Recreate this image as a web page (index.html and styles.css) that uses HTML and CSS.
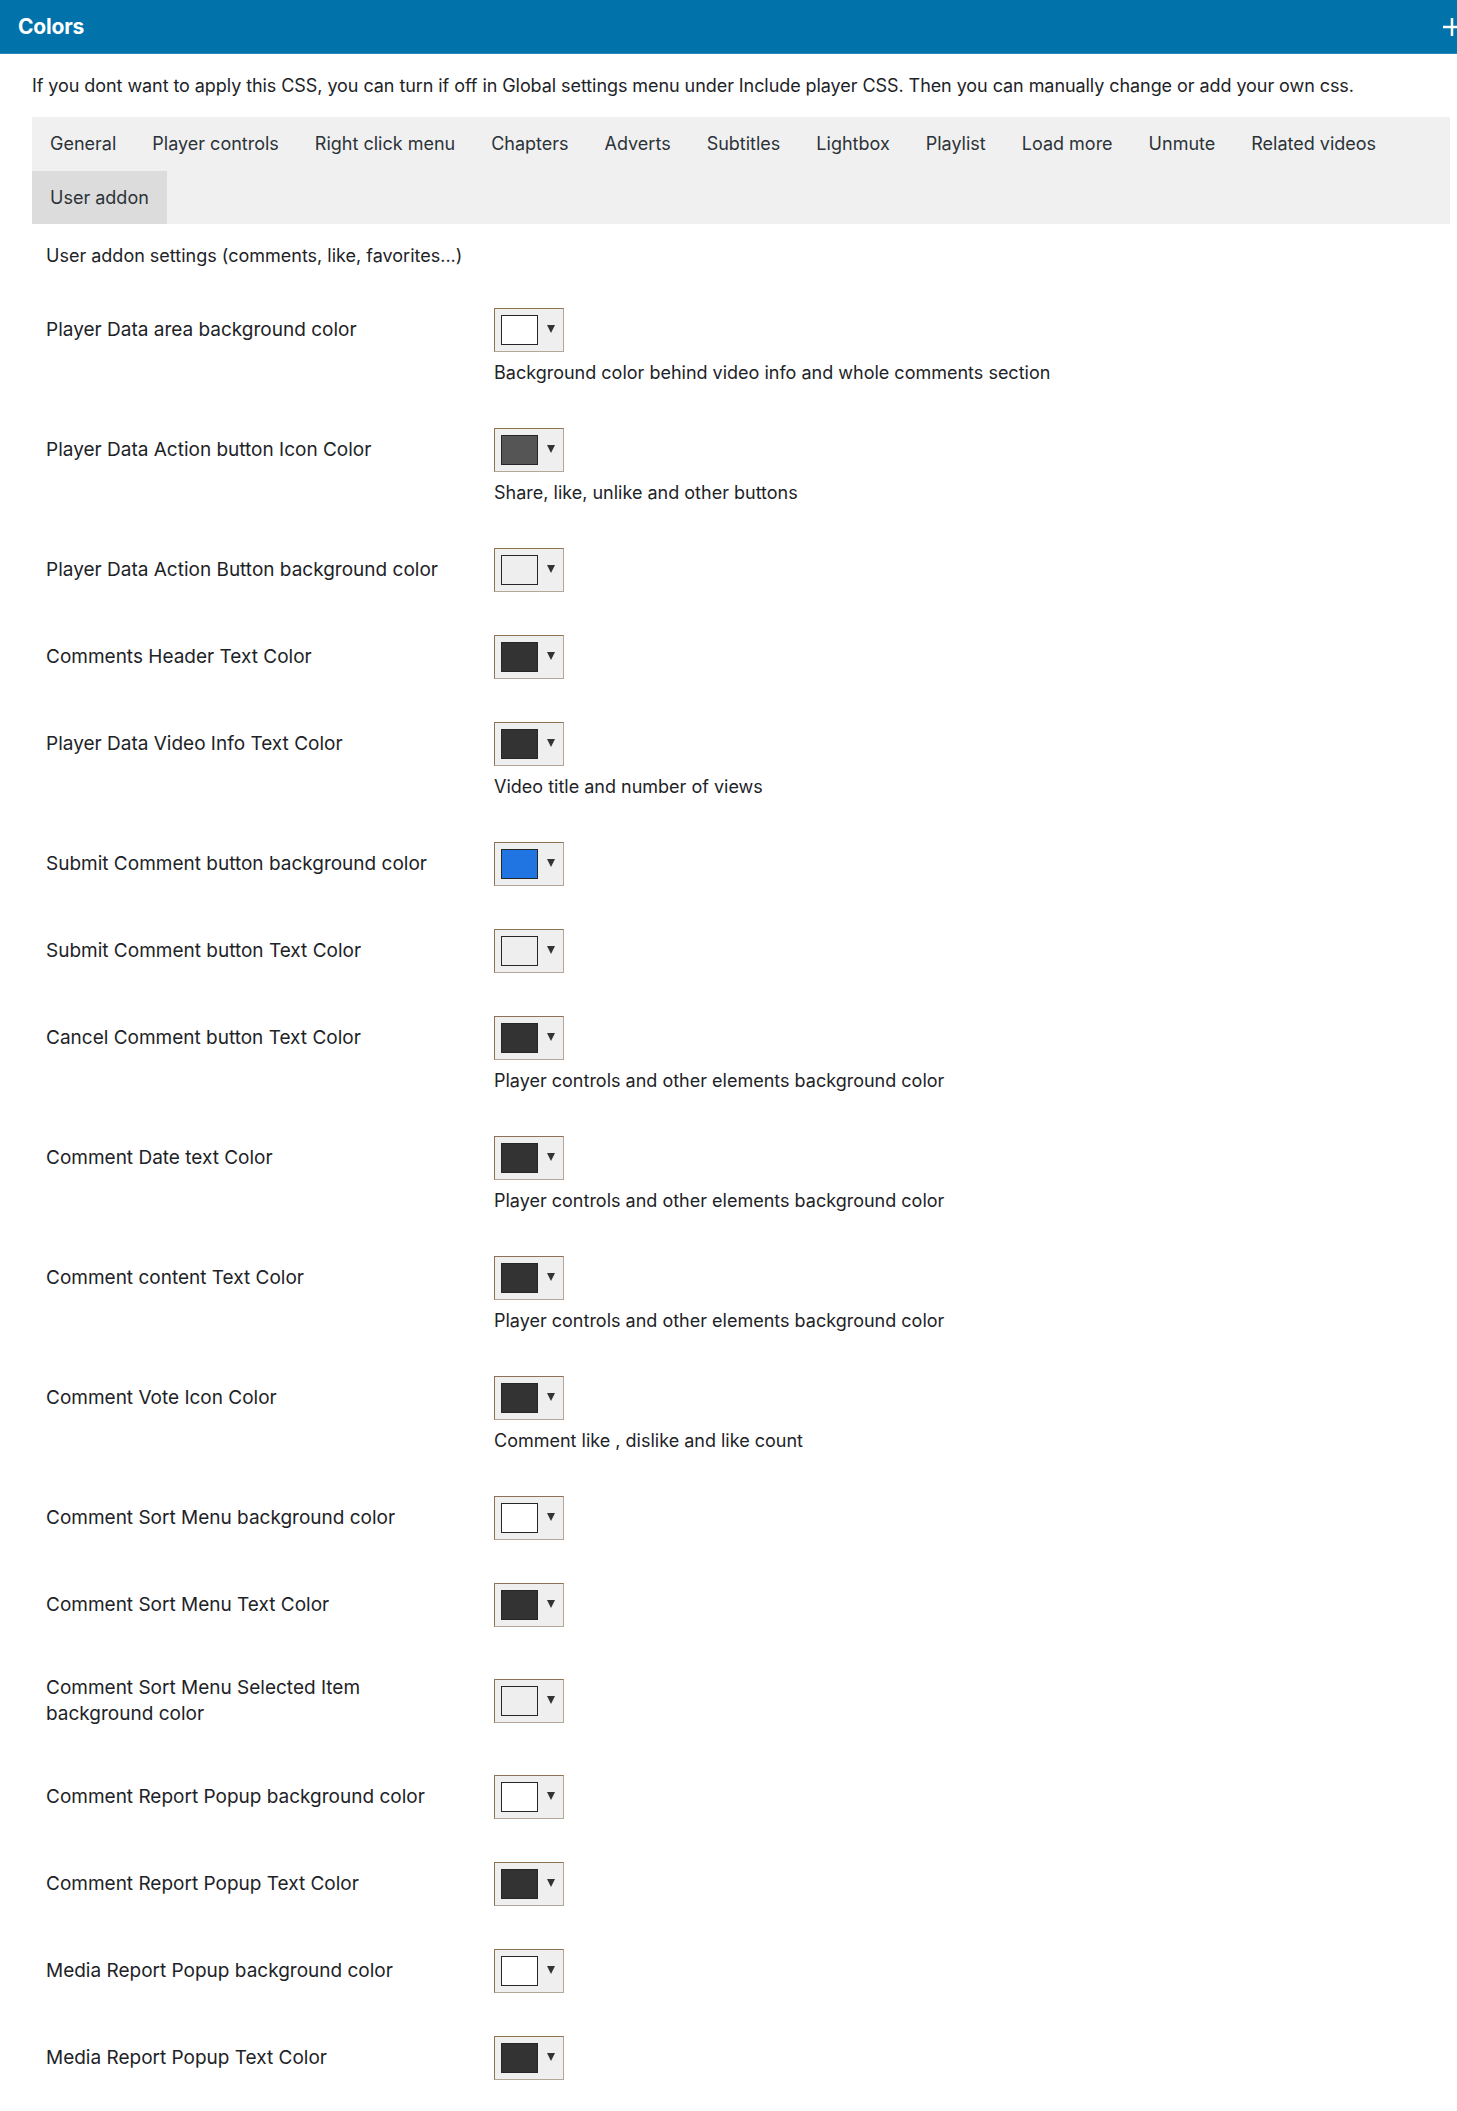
FILE: index.html
```html
<!DOCTYPE html>
<html lang="en">
<head>
<meta charset="utf-8">
<title>Colors</title>
<link rel="stylesheet" href="styles.css">
</head>
<body>
<div class="panel">
  <div class="panel-header">
    <span class="panel-title">Colors</span>
    <svg class="plus" width="18" height="18" viewBox="0 0 18 18" aria-hidden="true"><rect x="0" y="7.75" width="18" height="2.5" fill="#fff"/><rect x="7.75" y="0" width="2.5" height="18" fill="#fff"/></svg>
  </div>
  <div class="panel-body">
    <p class="intro">If you dont want to apply this CSS, you can turn if off in Global settings menu under Include player CSS. Then you can manually change or add your own css.</p>
    <div class="tabs">
      <div class="tab">General</div>
      <div class="tab">Player controls</div>
      <div class="tab">Right click menu</div>
      <div class="tab">Chapters</div>
      <div class="tab">Adverts</div>
      <div class="tab">Subtitles</div>
      <div class="tab">Lightbox</div>
      <div class="tab">Playlist</div>
      <div class="tab">Load more</div>
      <div class="tab">Unmute</div>
      <div class="tab">Related videos</div>
      <div class="tab active">User addon</div>
    </div>
    <div class="tab-content">
      <p class="section-title">User addon settings (comments, like, favorites...)</p>

      <div class="row">
        <div class="label">Player Data area background color</div>
        <div class="picker"><span class="swatch sw-white"></span><svg class="arrow" width="8" height="8" viewBox="0 0 8 8"><path d="M0 0H8L4 8Z" fill="#333"/></svg></div>
        <p class="desc">Background color behind video info and whole comments section</p>
      </div>

      <div class="row">
        <div class="label">Player Data Action button Icon Color</div>
        <div class="picker"><span class="swatch sw-mid"></span><svg class="arrow" width="8" height="8" viewBox="0 0 8 8"><path d="M0 0H8L4 8Z" fill="#333"/></svg></div>
        <p class="desc">Share, like, unlike and other buttons</p>
      </div>

      <div class="row">
        <div class="label">Player Data Action Button background color</div>
        <div class="picker"><span class="swatch sw-light"></span><svg class="arrow" width="8" height="8" viewBox="0 0 8 8"><path d="M0 0H8L4 8Z" fill="#333"/></svg></div>
      </div>

      <div class="row">
        <div class="label">Comments Header Text Color</div>
        <div class="picker"><span class="swatch sw-dark"></span><svg class="arrow" width="8" height="8" viewBox="0 0 8 8"><path d="M0 0H8L4 8Z" fill="#333"/></svg></div>
      </div>

      <div class="row">
        <div class="label">Player Data Video Info Text Color</div>
        <div class="picker"><span class="swatch sw-dark"></span><svg class="arrow" width="8" height="8" viewBox="0 0 8 8"><path d="M0 0H8L4 8Z" fill="#333"/></svg></div>
        <p class="desc">Video title and number of views</p>
      </div>

      <div class="row">
        <div class="label">Submit Comment button background color</div>
        <div class="picker"><span class="swatch sw-blue"></span><svg class="arrow" width="8" height="8" viewBox="0 0 8 8"><path d="M0 0H8L4 8Z" fill="#333"/></svg></div>
      </div>

      <div class="row">
        <div class="label">Submit Comment button Text Color</div>
        <div class="picker"><span class="swatch sw-light"></span><svg class="arrow" width="8" height="8" viewBox="0 0 8 8"><path d="M0 0H8L4 8Z" fill="#333"/></svg></div>
      </div>

      <div class="row">
        <div class="label">Cancel Comment button Text Color</div>
        <div class="picker"><span class="swatch sw-dark"></span><svg class="arrow" width="8" height="8" viewBox="0 0 8 8"><path d="M0 0H8L4 8Z" fill="#333"/></svg></div>
        <p class="desc">Player controls and other elements background color</p>
      </div>

      <div class="row">
        <div class="label">Comment Date text Color</div>
        <div class="picker"><span class="swatch sw-dark"></span><svg class="arrow" width="8" height="8" viewBox="0 0 8 8"><path d="M0 0H8L4 8Z" fill="#333"/></svg></div>
        <p class="desc">Player controls and other elements background color</p>
      </div>

      <div class="row">
        <div class="label">Comment content Text Color</div>
        <div class="picker"><span class="swatch sw-dark"></span><svg class="arrow" width="8" height="8" viewBox="0 0 8 8"><path d="M0 0H8L4 8Z" fill="#333"/></svg></div>
        <p class="desc">Player controls and other elements background color</p>
      </div>

      <div class="row">
        <div class="label">Comment Vote Icon Color</div>
        <div class="picker"><span class="swatch sw-dark"></span><svg class="arrow" width="8" height="8" viewBox="0 0 8 8"><path d="M0 0H8L4 8Z" fill="#333"/></svg></div>
        <p class="desc">Comment like , dislike and like count</p>
      </div>

      <div class="row">
        <div class="label">Comment Sort Menu background color</div>
        <div class="picker"><span class="swatch sw-white"></span><svg class="arrow" width="8" height="8" viewBox="0 0 8 8"><path d="M0 0H8L4 8Z" fill="#333"/></svg></div>
      </div>

      <div class="row">
        <div class="label">Comment Sort Menu Text Color</div>
        <div class="picker"><span class="swatch sw-dark"></span><svg class="arrow" width="8" height="8" viewBox="0 0 8 8"><path d="M0 0H8L4 8Z" fill="#333"/></svg></div>
      </div>

      <div class="row">
        <div class="label">Comment Sort Menu Selected Item background color</div>
        <div class="picker"><span class="swatch sw-light"></span><svg class="arrow" width="8" height="8" viewBox="0 0 8 8"><path d="M0 0H8L4 8Z" fill="#333"/></svg></div>
      </div>

      <div class="row">
        <div class="label">Comment Report Popup background color</div>
        <div class="picker"><span class="swatch sw-white"></span><svg class="arrow" width="8" height="8" viewBox="0 0 8 8"><path d="M0 0H8L4 8Z" fill="#333"/></svg></div>
      </div>

      <div class="row">
        <div class="label">Comment Report Popup Text Color</div>
        <div class="picker"><span class="swatch sw-dark"></span><svg class="arrow" width="8" height="8" viewBox="0 0 8 8"><path d="M0 0H8L4 8Z" fill="#333"/></svg></div>
      </div>

      <div class="row">
        <div class="label">Media Report Popup background color</div>
        <div class="picker"><span class="swatch sw-white"></span><svg class="arrow" width="8" height="8" viewBox="0 0 8 8"><path d="M0 0H8L4 8Z" fill="#333"/></svg></div>
      </div>

      <div class="row">
        <div class="label">Media Report Popup Text Color</div>
        <div class="picker"><span class="swatch sw-dark"></span><svg class="arrow" width="8" height="8" viewBox="0 0 8 8"><path d="M0 0H8L4 8Z" fill="#333"/></svg></div>
      </div>
    </div>
  </div>
</div>
</body>
</html>
```

FILE: styles.css
```css
html, body {
  margin: 0;
  padding: 0;
  background: #fff;
}

body {
  font-family: Inter, "Noto Sans", "Liberation Sans", sans-serif;
  font-size: 18px;
  color: #1d2327;
  overflow-x: hidden;
}

.panel-header {
  height: 53px;
  background: #0273aa;
  border-bottom: 1px solid #2a87b9;
  display: flex;
  align-items: center;
  justify-content: space-between;
  padding-left: 18px;
  overflow: hidden;
}

.panel-title {
  color: #fff;
  font-weight: 700;
  font-size: 21px;
  letter-spacing: -0.2px;
}

.plus {
  display: block;
  flex: none;
  margin-right: -4px;
}

.panel-body {
  padding: 0 7px 0 32px;
}

.intro {
  margin: 20px 0 19px;
  line-height: 24px;
  letter-spacing: -0.07px;
}

.tabs {
  display: flex;
  flex-wrap: wrap;
  background: #f0f0f0;
}

.tab {
  height: 53.5px;
  display: flex;
  align-items: center;
  padding: 0 18px;
  color: #2c3338;
  white-space: nowrap;
}

.tab.active {
  background: #dcdcdc;
}

.tab-content {
  padding-left: 14px;
}

.section-title {
  margin: 20px 0 40px;
  line-height: 24px;
}

.row {
  display: grid;
  grid-template-columns: 448px 1fr;
  align-items: center;
  margin-bottom: 43px;
}

.label {
  grid-column: 1;
  grid-row: 1;
  padding: 5px 0;
  font-size: 19px;
  line-height: 26px;
  max-width: 404px;
}

.picker {
  grid-column: 2;
  grid-row: 1;
  box-sizing: border-box;
  width: 70px;
  height: 44px;
  border: 1px solid;
  border-color: #8e7256 #b5a797 #b5a797 #8e7256;
  background: #efefef;
  display: flex;
  align-items: center;
  padding-left: 6px;
}

.swatch {
  box-sizing: border-box;
  width: 37px;
  height: 30px;
  border: 1px solid #262626;
  flex: none;
}

.arrow {
  display: block;
  margin-left: 9px;
  margin-top: -2px;
}

.desc {
  grid-column: 2;
  grid-row: 2;
  margin: 9px 0 0;
  line-height: 24px;
}

.sw-white { background: #ffffff; }
.sw-light { background: #eeeeee; }
.sw-mid { background: #555555; }
.sw-dark { background: #333333; }
.sw-blue { background: #2175e2; }
```
